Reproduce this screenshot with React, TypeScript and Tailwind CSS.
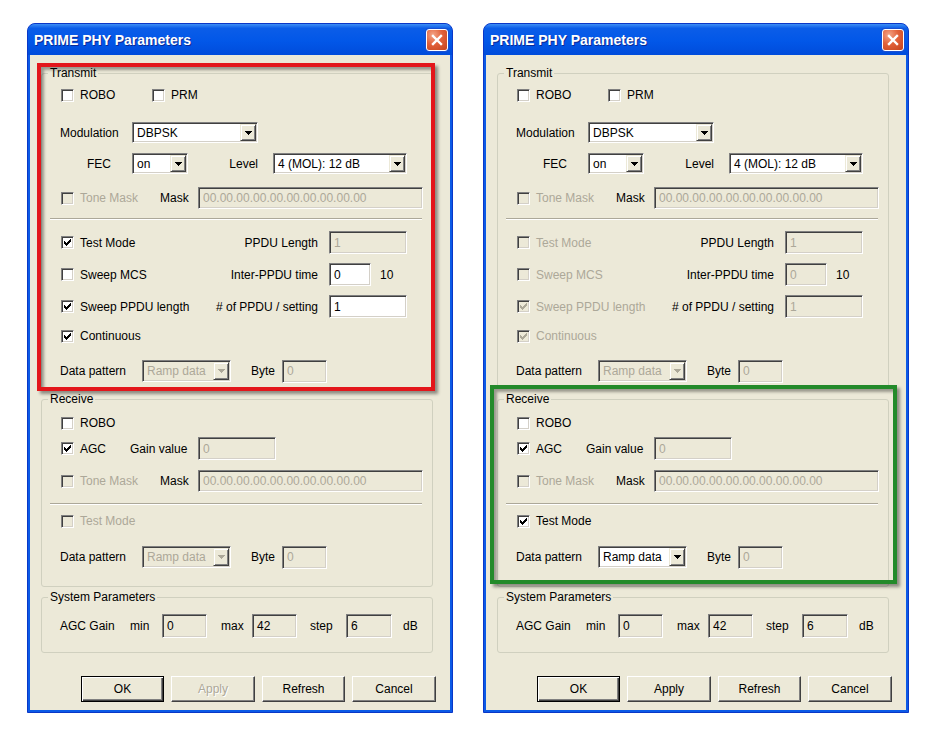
import React from "react";

type Mode = "a" | "b";

// classic sunken 3d edge used by edits, combos and checkboxes
const SUNKEN =
  "border border-t-[#808080] border-l-[#808080] border-r-white border-b-white shadow-[inset_1px_1px_0_#404040,inset_-1px_-1px_0_#d4d0c8]";

const CheckMark = ({ dim }: { dim?: boolean }) => (
  <svg
    width="7"
    height="7"
    viewBox="0 0 7 7"
    shapeRendering="crispEdges"
    className={dim ? "fill-[#aca899]" : "fill-black"}
  >
    <path d="M6 0h1v3h-1zM5 1h1v3h-1zM4 2h1v3h-1zM3 3h1v3h-1zM2 4h1v3h-1zM1 3h1v3h-1zM0 2h1v3h-1z" />
  </svg>
);

const Check = ({
  label,
  checked = false,
  disabled = false,
  w = "",
}: {
  label: string;
  checked?: boolean;
  disabled?: boolean;
  w?: string;
}) => (
  <div className={`flex items-center h-[16px] shrink-0 ${w}`}>
    <span
      className={`flex items-center justify-center w-[13px] h-[13px] shrink-0 ${SUNKEN} ${
        disabled ? "bg-[#ece9d8]" : "bg-white"
      }`}
    >
      {checked && <CheckMark dim={disabled} />}
    </span>
    <span
      className={`ml-[6px] whitespace-nowrap ${
        disabled ? "text-[#aca899]" : "text-black"
      }`}
    >
      {label}
    </span>
  </div>
);

const Field = ({
  value,
  w,
  h = "h-[22px]",
  state = "off",
}: {
  value: string;
  w: string;
  h?: string;
  state?: "on" | "off" | "ro";
}) => {
  const look =
    state === "on"
      ? "bg-white text-black"
      : state === "ro"
      ? "bg-[#ece9d8] text-black"
      : "bg-[#ece9d8] text-[#aca899]";
  return (
    <div
      className={`${w} ${h} ${SUNKEN} ${look} flex items-center pl-[4px] shrink-0 whitespace-nowrap overflow-hidden`}
    >
      {value}
    </div>
  );
};

const Combo = ({
  value,
  w,
  h = "h-[21px]",
  disabled = false,
}: {
  value: string;
  w: string;
  h?: string;
  disabled?: boolean;
}) => (
  <div
    className={`${w} ${h} ${SUNKEN} ${
      disabled ? "bg-[#ece9d8] text-[#aca899]" : "bg-white text-black"
    } flex items-stretch p-[1px] shrink-0`}
  >
    <span className="flex-1 flex items-center pl-[3px] whitespace-nowrap overflow-hidden">
      {value}
    </span>
    <span className="w-[16px] flex items-center justify-center bg-[#ece9d8] border border-t-[#ece9d8] border-l-[#ece9d8] border-r-[#404040] border-b-[#404040] shadow-[inset_1px_1px_0_#fff,inset_-1px_-1px_0_#808080]">
      <svg
        width="7"
        height="4"
        viewBox="0 0 7 4"
        shapeRendering="crispEdges"
        className={disabled ? "fill-[#aca899]" : "fill-black"}
      >
        <path d="M0 0h7v1h-7zM1 1h5v1h-5zM2 2h3v1h-3zM3 3h1v1h-1z" />
      </svg>
    </span>
  </div>
);

const Group = ({
  title,
  className = "",
  children,
}: {
  title: string;
  className?: string;
  children: React.ReactNode;
}) => (
  <fieldset
    className={`w-[392px] border border-[#d0d0bf] rounded-[3px] ${className}`}
  >
    <legend className="ml-[6px] px-[2px] leading-[14px]">{title}</legend>
    {children}
  </fieldset>
);

const Sep = ({ className }: { className: string }) => (
  <div
    className={`${className} ml-[8px] mr-[10px] border-t border-t-[#aca899] border-b border-b-white`}
  />
);

// right-aligned caption that may spill to the left
const RLabel = ({ text }: { text: string }) => (
  <div className="w-[96px] flex justify-end pr-[11px] shrink-0">
    <span className="whitespace-nowrap">{text}</span>
  </div>
);

const Btn = ({
  label,
  w,
  disabled = false,
  isDefault = false,
}: {
  label: string;
  w: string;
  disabled?: boolean;
  isDefault?: boolean;
}) => (
  <div
    className={`${w} h-[26px] flex items-center justify-center bg-[#ece9d8] ${
      isDefault
        ? "border border-black shadow-[inset_1px_1px_0_#fff,inset_-1px_-1px_0_#404040,inset_-2px_-2px_0_#808080]"
        : "border border-t-white border-l-white border-r-[#404040] border-b-[#404040] shadow-[inset_-1px_-1px_0_#808080]"
    } ${
      disabled
        ? "text-[#aca899] [text-shadow:1px_1px_0_#fff]"
        : "text-black"
    }`}
  >
    {label}
  </div>
);

const CloseBox = () => (
  <div className="w-[22px] h-[22px] rounded-[3px] border border-white bg-[radial-gradient(circle_at_30%_25%,#f3a487_0%,#e2613a_45%,#c4421c_100%)] flex items-center justify-center shadow-[0_0_0_1px_#1a4fd0]">
    <svg width="12" height="12" viewBox="0 0 12 12">
      <path
        d="M2 2L10 10M10 2L2 10"
        stroke="#fff"
        strokeWidth="2.4"
        strokeLinecap="square"
      />
    </svg>
  </div>
);

const Dialog = ({ mode }: { mode: Mode }) => {
  const a = mode === "a";
  return (
    <div className="relative w-[426px] h-[690px] flex flex-col rounded-t-[8px] border border-[#0a37c8] bg-[#0c5ae6]">
      <div className="h-[31px] flex items-center pl-[6px] pr-[4px] rounded-t-[7px] bg-[linear-gradient(to_bottom,#3d8ef5_0%,#0b5de8_14%,#0257e8_55%,#004cdb_100%)]">
        <span className="flex-1 text-white font-bold text-[14px] [text-shadow:1px_1px_0_#0a2a96]">
          PRIME PHY Parameters
        </span>
        <CloseBox />
      </div>

      <div className="flex-1 mx-[2px] mb-[2px] bg-[#ece9d8] pl-[11px] pt-[11px]">
        <Group title="Transmit" className="pb-[6px]">
          <div className="mt-[7px] flex items-center pl-[19px]">
            <Check label="ROBO" w="w-[91px]" />
            <Check label="PRM" />
          </div>
          <div className="mt-[19px] h-[21px] flex items-center pl-[18px]">
            <span className="w-[72px]">Modulation</span>
            <Combo value="DBPSK" w="w-[126px]" />
          </div>
          <div className="mt-[10px] h-[21px] flex items-center pl-[18px]">
            <span className="w-[72px] text-right pr-[21px]">FEC</span>
            <Combo value="on" w="w-[56px]" />
            <span className="w-[85px] text-right pr-[15px]">Level</span>
            <Combo value="4 (MOL): 12 dB" w="w-[134px]" />
          </div>
          <div className="mt-[13px] h-[22px] flex items-center pl-[19px]">
            <Check label="Tone Mask" disabled w="w-[99px]" />
            <span className="w-[38px]">Mask</span>
            <Field value="00.00.00.00.00.00.00.00.00.00" w="w-[225px]" />
          </div>
          <Sep className="mt-[9px]" />
          <div className="mt-[11px] h-[23px] flex items-center pl-[19px]">
            <Check label="Test Mode" checked={a} disabled={!a} w="w-[172px]" />
            <RLabel text="PPDU Length" />
            <Field value="1" w="w-[78px]" h="h-[23px]" />
          </div>
          <div className="mt-[9px] h-[23px] flex items-center pl-[19px]">
            <Check label="Sweep MCS" disabled={!a} w="w-[172px]" />
            <RLabel text="Inter-PPDU time" />
            <Field
              value="0"
              w="w-[42px]"
              h="h-[23px]"
              state={a ? "on" : "off"}
            />
            <span className="ml-[9px]">10</span>
          </div>
          <div className="mt-[9px] h-[23px] flex items-center pl-[19px]">
            <Check
              label="Sweep PPDU length"
              checked
              disabled={!a}
              w="w-[172px]"
            />
            <RLabel text="# of PPDU / setting" />
            <Field
              value="1"
              w="w-[78px]"
              h="h-[23px]"
              state={a ? "on" : "off"}
            />
          </div>
          <div className="mt-[10px] flex items-center pl-[19px]">
            <Check label="Continuous" checked disabled={!a} />
          </div>
          <div className="mt-[16px] h-[22px] flex items-center pl-[18px]">
            <span className="w-[82px]">Data pattern</span>
            <Combo value="Ramp data" w="w-[89px]" h="h-[22px]" disabled />
            <span className="ml-[20px] w-[31px]">Byte</span>
            <Field value="0" w="w-[45px]" h="h-[23px]" />
          </div>
        </Group>

        <Group title="Receive" className="mt-[3px] pb-[18px]">
          <div className="mt-[9px] flex items-center pl-[19px]">
            <Check label="ROBO" />
          </div>
          <div className="mt-[6px] h-[23px] flex items-center pl-[19px]">
            <Check label="AGC" checked w="w-[69px]" />
            <span className="w-[68px]">Gain value</span>
            <Field value="0" w="w-[78px]" h="h-[23px]" />
          </div>
          <div className="mt-[10px] h-[22px] flex items-center pl-[19px]">
            <Check label="Tone Mask" disabled w="w-[99px]" />
            <span className="w-[38px]">Mask</span>
            <Field value="00.00.00.00.00.00.00.00.00.00" w="w-[225px]" />
          </div>
          <Sep className="mt-[11px]" />
          <div className="mt-[8px] flex items-center pl-[19px]">
            <Check label="Test Mode" checked={!a} disabled={a} />
          </div>
          <div className="mt-[17px] h-[22px] flex items-center pl-[18px]">
            <span className="w-[82px]">Data pattern</span>
            <Combo value="Ramp data" w="w-[89px]" h="h-[22px]" disabled={a} />
            <span className="ml-[20px] w-[31px]">Byte</span>
            <Field value="0" w="w-[45px]" h="h-[23px]" />
          </div>
        </Group>

        <Group title="System Parameters" className="mt-[3px] pb-[14px]">
          <div className="mt-[10px] h-[24px] flex items-center pl-[18px]">
            <span className="w-[70px]">AGC Gain</span>
            <span className="w-[32px]">min</span>
            <Field value="0" w="w-[45px]" h="h-[24px]" state="ro" />
            <span className="ml-[14px] w-[31px]">max</span>
            <Field value="42" w="w-[45px]" h="h-[24px]" state="ro" />
            <span className="ml-[13px] w-[36px]">step</span>
            <Field value="6" w="w-[46px]" h="h-[24px]" state="ro" />
            <span className="ml-[11px]">dB</span>
          </div>
        </Group>

        <div className="mt-[23px] flex gap-[7px] pl-[40px]">
          <Btn label="OK" w="w-[83px]" isDefault />
          <Btn label="Apply" w="w-[84px]" disabled={a} />
          <Btn label="Refresh" w="w-[83px]" />
          <Btn label="Cancel" w="w-[84px]" />
        </div>
      </div>

      {/* highlight marks drawn over the dialog */}
      {a ? (
        <div className="absolute left-[9px] top-[39px] w-[398px] h-[328px] border-[4px] border-[#e3161b] shadow-[3px_3px_3px_rgba(0,0,0,0.4),inset_3px_3px_3px_rgba(0,0,0,0.35)] pointer-events-none" />
      ) : (
        <div className="absolute left-[6px] top-[361px] w-[407px] h-[199px] border-[4px] border-[#238a2a] shadow-[3px_3px_3px_rgba(0,0,0,0.4),inset_3px_3px_3px_rgba(0,0,0,0.35)] pointer-events-none" />
      )}
    </div>
  );
};

export default function App() {
  return (
    <div className="w-[925px] h-[732px] bg-white flex gap-[30px] pl-[27px] pt-[23px] font-['Liberation_Sans',Arial,sans-serif] text-[12px] leading-[14px] text-black">
      <Dialog mode="a" />
      <Dialog mode="b" />
    </div>
  );
}
